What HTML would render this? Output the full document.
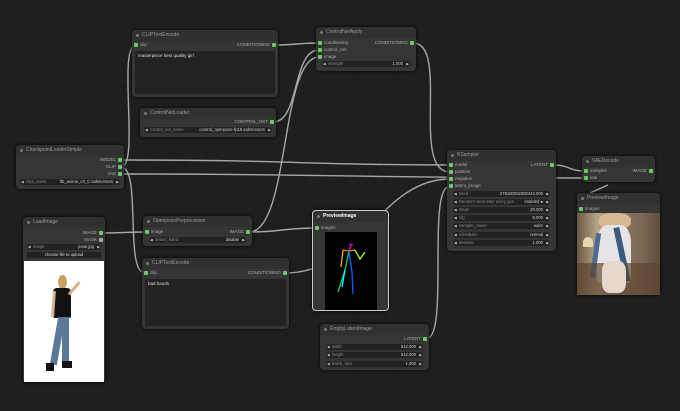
<!DOCTYPE html>
<html><head><meta charset="utf-8"><style>
*{margin:0;padding:0;box-sizing:border-box}
body{width:680px;height:411px;overflow:hidden;background:#1e1e1e;font-family:"Liberation Sans",sans-serif;position:relative;
background-image:linear-gradient(#212121 1px,transparent 1px),linear-gradient(90deg,#212121 1px,transparent 1px);background-size:10px 10px}
.n{position:absolute;background:#353535;border-radius:4px;box-shadow:0 0 3px #000}
.t{position:absolute;left:0;right:0;top:0;height:11px;background:#303030;border-radius:4px 4px 0 0;color:#999;font-size:5px;line-height:11px;padding-left:10px}
.t:before{content:"";position:absolute;left:4px;top:4px;width:3px;height:3px;border-radius:50%;background:#777}
.l{position:absolute;font-size:4.5px;color:#aaa;line-height:6px}
.d{position:absolute;width:4px;height:4px;background:#6c6;border-radius:1px}
.w{position:absolute;height:6px;background:#222;border-radius:3px;font-size:4.2px;color:#888;line-height:6px;padding:0 6px}
.w b{position:absolute;right:7px;color:#ccc;font-weight:normal}
.w:before{content:"◀";position:absolute;left:1px;font-size:3.5px;color:#ccc}
.w:after{content:"▶";position:absolute;right:1px;font-size:3.5px;color:#ccc}
.ta{position:absolute;background:#222;border-radius:2px;font-size:4.5px;color:#ddd;padding:2px 3px}
svg{position:absolute;left:0;top:0}
</style></head><body>
<svg width="680" height="411" fill="none" stroke="#a4a8a2" stroke-width="1.4">
<path d="M121,167 C140,167 117,45 136,45"/>
<path d="M121,167 C142,167 124,273 145,273"/>
<path d="M121,160 C300,160 300,165 450,165"/>
<path d="M121,174 C350,174 350,178 585,178"/>
<path d="M275,45 C295,45 299,43 319,43"/>
<path d="M273,122 C300,122 292,50 319,50"/>
<path d="M249,232 C290,232 280,57 319,57"/>
<path d="M249,232 C280,232 285,228 316,228"/>
<path d="M102,233 C125,233 123,232 146,232"/>
<path d="M413,43 C450,43 410,172 450,172"/>
<path d="M286,273 C360,273 380,179 450,179"/>
<path d="M426,339 C450,339 426,186 450,186"/>
<path d="M553,165 C570,165 568,171 585,171"/>
<path d="M608,185 L590,193"/>
</svg>

<div class="n" style="left:132px;top:30px;width:146px;height:67px"><div class="t">CLIPTextEncode</div>
<div class="d" style="left:2px;top:13px"></div><div class="l" style="left:8px;top:12px">clip</div>
<div class="l" style="right:8px;top:12px">CONDITIONING</div><div class="d" style="right:2px;top:13px"></div>
<div class="ta" style="left:3px;top:21px;width:140px;height:43px">masterpiece best quality girl</div></div>

<div class="n" style="left:140px;top:108px;width:136px;height:29px"><div class="t">ControlNetLoader</div>
<div class="l" style="right:8px;top:11px">CONTROL_NET</div><div class="d" style="right:2px;top:12px"></div>
<div class="w" style="left:4px;top:19px;width:128px">control_net_name<b>control_openpose-fp16.safetensors</b></div></div>

<div class="n" style="left:16px;top:145px;width:108px;height:44px"><div class="t">CheckpointLoaderSimple</div>
<div class="l" style="right:8px;top:12px">MODEL</div><div class="d" style="right:2px;top:13px"></div>
<div class="l" style="right:8px;top:19px">CLIP</div><div class="d" style="right:2px;top:20px"></div>
<div class="l" style="right:8px;top:26px">VAE</div><div class="d" style="right:2px;top:27px"></div>
<div class="w" style="left:4px;top:34px;width:100px">ckpt_name<b>ftb_anime_v3_C.safetensors</b></div></div>

<div class="n" style="left:316px;top:27px;width:100px;height:44px"><div class="t">ControlNetApply</div>
<div class="d" style="left:2px;top:14px"></div><div class="l" style="left:8px;top:13px">conditioning</div>
<div class="d" style="left:2px;top:21px"></div><div class="l" style="left:8px;top:20px">control_net</div>
<div class="d" style="left:2px;top:28px"></div><div class="l" style="left:8px;top:27px">image</div>
<div class="l" style="right:8px;top:13px">CONDITIONING</div><div class="d" style="right:2px;top:14px"></div>
<div class="w" style="left:6px;top:34px;width:88px">strength<b>1.000</b></div></div>

<div class="n" style="left:447px;top:150px;width:109px;height:101px"><div class="t">KSampler</div>
<div class="d" style="left:2px;top:13px"></div><div class="l" style="left:8px;top:12px">model</div>
<div class="d" style="left:2px;top:20px"></div><div class="l" style="left:8px;top:19px">positive</div>
<div class="d" style="left:2px;top:27px"></div><div class="l" style="left:8px;top:26px">negative</div>
<div class="d" style="left:2px;top:34px"></div><div class="l" style="left:8px;top:33px">latent_image</div>
<div class="l" style="right:8px;top:12px">LATENT</div><div class="d" style="right:2px;top:13px"></div>
<div class="w" style="left:6px;top:41px;width:97px">seed<b>278180092050442.000</b></div>
<div class="w" style="left:6px;top:49px;width:97px">Random seed after every gen<b>enabled ●</b></div>
<div class="w" style="left:6px;top:57px;width:97px">steps<b>20.000</b></div>
<div class="w" style="left:6px;top:65px;width:97px">cfg<b>8.000</b></div>
<div class="w" style="left:6px;top:73px;width:97px">sampler_name<b>euler</b></div>
<div class="w" style="left:6px;top:82px;width:97px">scheduler<b>normal</b></div>
<div class="w" style="left:6px;top:90px;width:97px">denoise<b>1.000</b></div></div>

<div class="n" style="left:582px;top:156px;width:73px;height:26px"><div class="t">VAEDecode</div>
<div class="d" style="left:2px;top:13px"></div><div class="l" style="left:8px;top:12px">samples</div>
<div class="d" style="left:2px;top:20px"></div><div class="l" style="left:8px;top:19px">vae</div>
<div class="l" style="right:8px;top:12px">IMAGE</div><div class="d" style="right:2px;top:13px"></div></div>

<div class="n" style="left:577px;top:193px;width:83px;height:102px"><div class="t">PreviewImage</div>
<div class="d" style="left:2px;top:14px"></div><div class="l" style="left:8px;top:13px">images</div>
<div style="position:absolute;left:0;top:20px;width:83px;height:82px;background:linear-gradient(90deg,#6a5846,#b8a688 25%,#8c7560 55%,#7a6652 80%,#5e4c3c);overflow:hidden">
<div style="position:absolute;left:6px;top:24px;width:10px;height:10px;background:#e8d8b0;border-radius:50% 50% 0 0"></div>
<div style="position:absolute;left:22px;top:0;width:32px;height:16px;background:#d8b890;border-radius:40%"></div>
<div style="position:absolute;left:20px;top:12px;width:34px;height:58px;background:#e6e4e6;border-radius:30% 30% 10% 10%"></div>
<div style="position:absolute;left:42px;top:14px;width:6px;height:55px;background:#3a5a80;transform:rotate(-12deg)"></div>
<div style="position:absolute;left:16px;top:20px;width:5px;height:45px;background:#4a6a8e;transform:rotate(8deg)"></div>
<div style="position:absolute;left:0;top:50px;width:83px;height:32px;background:rgba(90,66,44,.65)"></div>
<div style="position:absolute;left:25px;top:48px;width:24px;height:32px;background:#e8d8cc;border-radius:30%"></div></div></div>

<div class="n" style="left:23px;top:217px;width:82px;height:165px"><div class="t">LoadImage</div>
<div class="l" style="right:8px;top:13px">IMAGE</div><div class="d" style="right:2px;top:14px"></div>
<div class="l" style="right:8px;top:20px">MASK</div><div class="d" style="right:2px;top:21px;background:#aaa"></div>
<div class="w" style="left:4px;top:27px;width:74px">image<b>pose.jpg</b></div>
<div style="position:absolute;left:4px;top:35px;width:74px;height:6px;background:#222;font-size:4.2px;color:#ddd;text-align:center;line-height:6px">choose file to upload</div>
<div style="position:absolute;left:1px;top:44px;width:80px;height:121px;background:#fff">
<div style="position:absolute;left:34px;top:14px;width:9px;height:14px;background:#c9a060;border-radius:50%"></div>
<div style="position:absolute;left:29px;top:27px;width:18px;height:30px;background:#111;border-radius:4px 4px 2px 2px"></div>
<div style="position:absolute;left:45px;top:32px;width:16px;height:3px;background:#d8b090;transform:rotate(-50deg);transform-origin:left"></div>
<div style="position:absolute;left:28px;top:30px;width:3px;height:26px;background:#d8b090;transform:rotate(4deg)"></div>
<div style="position:absolute;left:30px;top:56px;width:7px;height:48px;background:#5a7898;transform:rotate(10deg)"></div>
<div style="position:absolute;left:38px;top:56px;width:7px;height:48px;background:#5a7898"></div>
<div style="position:absolute;left:22px;top:102px;width:8px;height:8px;background:#111"></div>
<div style="position:absolute;left:38px;top:100px;width:10px;height:7px;background:#111"></div></div></div>

<div class="n" style="left:143px;top:216px;width:109px;height:30px"><div class="t">OpenposePreprocessor</div>
<div class="d" style="left:2px;top:14px"></div><div class="l" style="left:8px;top:13px">image</div>
<div class="l" style="right:8px;top:13px">IMAGE</div><div class="d" style="right:2px;top:14px"></div>
<div class="w" style="left:6px;top:21px;width:97px">detect_hand<b>disable</b></div></div>

<div class="n" style="left:142px;top:258px;width:147px;height:71px"><div class="t">CLIPTextEncode</div>
<div class="d" style="left:2px;top:13px"></div><div class="l" style="left:8px;top:12px">clip</div>
<div class="l" style="right:8px;top:12px">CONDITIONING</div><div class="d" style="right:2px;top:13px"></div>
<div class="ta" style="left:3px;top:21px;width:141px;height:47px">bad hands</div></div>

<div class="n" style="left:312px;top:210px;width:77px;height:101px;border:1.5px solid #ccc"><div class="t" style="color:#fff;font-weight:bold">PreviewImage</div>
<div class="d" style="left:2px;top:15px"></div><div class="l" style="left:8px;top:14px">images</div>
<svg style="left:12px;top:21px" width="52" height="78"><rect width="52" height="78" fill="#000"/>
<g stroke-width="1.3" fill="none"><path d="M24,12 L28,13" stroke="#a0f"/><path d="M24,19 L26,13" stroke="#f0a"/><path d="M18,18 L24,19 L30,18" stroke="#f80"/><path d="M18,18 L16,35" stroke="#fa0"/><path d="M30,18 L35,27 L40,20" stroke="#af0"/><path d="M24,19 L20,38 L13,60" stroke="#0c6"/><path d="M24,19 L27,40 L28,62" stroke="#06f"/><path d="M20,38 L17,55" stroke="#0ff"/></g></svg></div>

<div class="n" style="left:320px;top:324px;width:109px;height:46px"><div class="t">EmptyLatentImage</div>
<div class="l" style="right:8px;top:12px">LATENT</div><div class="d" style="right:2px;top:13px"></div>
<div class="w" style="left:6px;top:20px;width:97px">width<b>512.000</b></div>
<div class="w" style="left:6px;top:28px;width:97px">height<b>512.000</b></div>
<div class="w" style="left:6px;top:37px;width:97px">batch_size<b>1.000</b></div></div>
</body></html>
